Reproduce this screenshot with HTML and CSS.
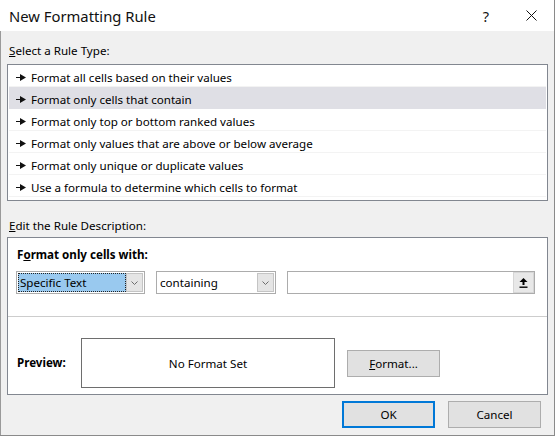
FILE: index.html
```html
<!DOCTYPE html>
<html lang="en">
<head>
<meta charset="utf-8">
<title>New Formatting Rule</title>
<link rel="stylesheet" href="styles.css">
</head>
<body>
<div class="window">
  <div class="titlebar">
    <span class="title">New Formatting Rule</span>
    <span class="help">?</span>
    <span class="close">
      <svg width="11" height="11" viewBox="0 0 11 11"><path d="M0.5 0.5 L10.5 10.5 M10.5 0.5 L0.5 10.5" stroke="#111" stroke-width="1" fill="none"/></svg>
    </span>
  </div>
  <div class="body">
    <div class="label label-select"><u>S</u>elect a Rule Type:</div>
    <ul class="rule-list">
      <li class="rule"><svg class="bullet" width="10" height="7" viewBox="0 0 10 7"><path d="M0 3 H5 V4 H0 Z M4 0 L10 3.5 L4 7 Z" fill="#111"/></svg><span>Format all cells based on their values</span></li>
      <li class="rule selected"><svg class="bullet" width="10" height="7" viewBox="0 0 10 7"><path d="M0 3 H5 V4 H0 Z M4 0 L10 3.5 L4 7 Z" fill="#111"/></svg><span>Format only cells that contain</span></li>
      <li class="rule"><svg class="bullet" width="10" height="7" viewBox="0 0 10 7"><path d="M0 3 H5 V4 H0 Z M4 0 L10 3.5 L4 7 Z" fill="#111"/></svg><span>Format only top or bottom ranked values</span></li>
      <li class="rule"><svg class="bullet" width="10" height="7" viewBox="0 0 10 7"><path d="M0 3 H5 V4 H0 Z M4 0 L10 3.5 L4 7 Z" fill="#111"/></svg><span>Format only values that are above or below average</span></li>
      <li class="rule"><svg class="bullet" width="10" height="7" viewBox="0 0 10 7"><path d="M0 3 H5 V4 H0 Z M4 0 L10 3.5 L4 7 Z" fill="#111"/></svg><span>Format only unique or duplicate values</span></li>
      <li class="rule"><svg class="bullet" width="10" height="7" viewBox="0 0 10 7"><path d="M0 3 H5 V4 H0 Z M4 0 L10 3.5 L4 7 Z" fill="#111"/></svg><span>Use a formula to determine which cells to format</span></li>
    </ul>
    <div class="label label-edit"><u>E</u>dit the Rule Description:</div>
    <div class="desc">
      <div class="desc-top">
        <div class="bold-label">F<u>o</u>rmat only cells with:</div>
        <div class="controls">
          <div class="combo combo-type">
            <div class="combo-value focused">Specific Text</div>
            <div class="combo-btn"><svg width="7" height="4" viewBox="0 0 7 4"><path d="M0.5 0.5 L3.5 3.5 L6.5 0.5" stroke="#6d6d6d" stroke-width="1" fill="none"/></svg></div>
          </div>
          <div class="combo combo-op">
            <div class="combo-value">containing</div>
            <div class="combo-btn"><svg width="7" height="4" viewBox="0 0 7 4"><path d="M0.5 0.5 L3.5 3.5 L6.5 0.5" stroke="#6d6d6d" stroke-width="1" fill="none"/></svg></div>
          </div>
          <div class="textbox">
            <div class="textbox-field"></div>
            <div class="ref-btn"><svg width="9" height="10" viewBox="0 0 9 10"><path d="M4.5 0 L8.5 4 L5.5 4 L5.5 7 L3.5 7 L3.5 4 L0.5 4 Z" fill="#000"/><rect x="0.5" y="8.5" width="8" height="1.4" fill="#000"/></svg></div>
          </div>
        </div>
      </div>
      <div class="separator"></div>
      <div class="preview-row">
        <div class="bold-label preview-label">Preview:</div>
        <div class="preview-box">No Format Set</div>
        <div class="btn btn-format"><u>F</u>ormat...</div>
      </div>
    </div>
    <div class="footer">
      <div class="btn btn-ok">OK</div>
      <div class="btn btn-cancel">Cancel</div>
    </div>
  </div>
</div>
</body>
</html>
```

FILE: styles.css
```css
* { box-sizing: border-box; }
html, body { margin: 0; padding: 0; }
body {
  font-family: "Noto Sans", "Open Sans", sans-serif;
  font-size: 11.6px;
  color: #000;
  background: #f0f0f0;
}
.window {
  width: 555px;
  height: 436px;
  background: #f0f0f0;
  border-right: 1px solid #8a8a8a;
  border-bottom: 1px solid #8a8a8a;
  display: flex;
  flex-direction: column;
}
.titlebar {
  height: 31px;
  background: #fff;
  display: flex;
  align-items: center;
  flex: none;
}
.title {
  margin-left: 9px;
  font-size: 14.8px;
  color: #111;
}
.help {
  margin-left: auto;
  width: 12px;
  text-align: center;
  font-size: 14.5px;
  color: #111;
}
.close {
  display: flex;
  margin-left: 34px;
  margin-right: 17px;
}
.body {
  flex: 1;
  border-left: 1px solid #9a9a9a;
  padding: 0 6px;
  display: flex;
  flex-direction: column;
}
.label {
  height: 16px;
  line-height: 16px;
  margin-left: 2px;
  white-space: nowrap;
}
.label-select { margin-top: 12px; margin-bottom: 5px; }
.label-edit { margin-top: 17px; margin-bottom: 3px; }
.rule-list {
  list-style: none;
  margin: 0;
  padding: 0 1px 3px 1px;
  height: 137px;
  border: 1px solid #828790;
  background: #fff;
}
.rule {
  height: 22px;
  border-bottom: 1px solid #f3f3f3;
  display: flex;
  align-items: center;
  padding-left: 7px;
  padding-top: 3px;
  gap: 5px;
  white-space: nowrap;
}
.rule .bullet { margin-top: 1px; }
.rule.selected { background: #dfdfe5; border-bottom-color: #dfdfe5; }
.bullet { flex: none; }
.desc {
  height: 158px;
  border: 1px solid #828790;
  background: #fff;
  display: flex;
  flex-direction: column;
}
.desc-top { padding: 9px 0 0 8px; }
.bold-label {
  height: 16px;
  line-height: 16px;
  font-weight: bold;
  margin-left: 1px;
  white-space: nowrap;
}
.controls {
  margin-top: 8px;
  display: flex;
  gap: 11px;
}
.combo {
  height: 23px;
  border: 1px solid #acacac;
  background: #fff;
  padding: 1px;
  display: flex;
}
.combo-type { width: 129px; }
.combo-op { width: 120px; }
.combo-value {
  flex: 1;
  display: flex;
  align-items: center;
  padding-left: 2px;
  white-space: nowrap;
}
.combo-value.focused {
  background: #99c9ef;
  border: 1px dotted #222;
  padding-left: 1px;
}
.combo-btn {
  width: 17px;
  background: #e5e5e5;
  border: 1px solid #c4c4c4;
  display: flex;
  align-items: center;
  justify-content: center;
}
.textbox {
  width: 248px;
  height: 23px;
  border: 1px solid #acacac;
  background: #fff;
  display: flex;
}
.textbox-field { flex: 1; }
.ref-btn {
  width: 21px;
  background: #e8e8e8;
  border: 1px solid #d6d6d6;
  display: flex;
  align-items: center;
  justify-content: center;
}
.separator {
  margin-top: 22px;
  height: 1px;
  background: #cdcdcd;
  flex: none;
}
.preview-row {
  margin-top: 21px;
  padding-left: 8px;
  display: flex;
  align-items: center;
}
.preview-label { width: 64px; }
.preview-box {
  width: 254px;
  height: 50px;
  border: 1px solid #6e6e6e;
  display: flex;
  align-items: center;
  justify-content: center;
  white-space: nowrap;
}
.btn {
  width: 93px;
  height: 27px;
  background: #e1e1e1;
  border: 1px solid #adadad;
  display: flex;
  align-items: center;
  justify-content: center;
  white-space: nowrap;
}
.btn-format { margin-left: 12px; }
.footer {
  margin-top: 6px;
  margin-right: 7px;
  display: flex;
  justify-content: flex-end;
  gap: 13px;
}
.btn-ok { border: 2px solid #0078d7; }
```
